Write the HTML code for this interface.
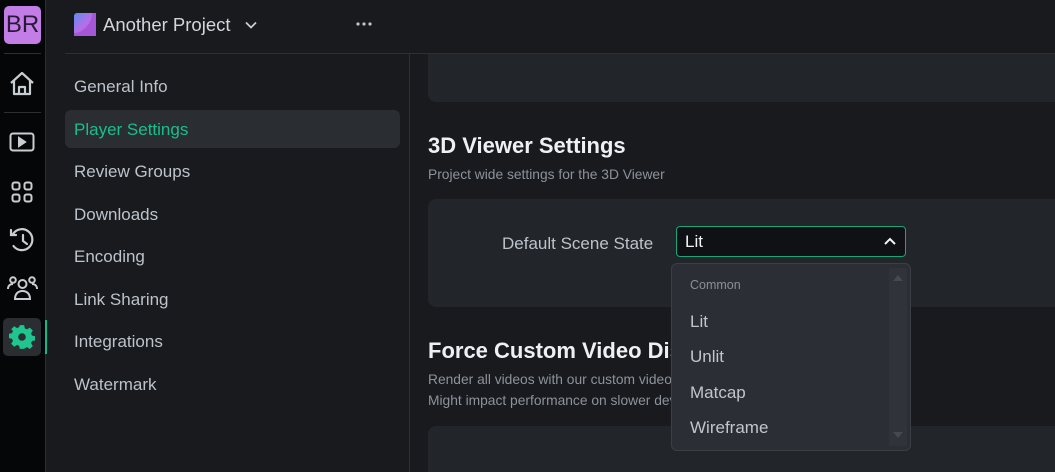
<!DOCTYPE html>
<html><head><style>
*{margin:0;padding:0;box-sizing:border-box}
html,body{width:1055px;height:472px;overflow:hidden}
body{background:#181a1d;font-family:"Liberation Sans",sans-serif;position:relative}
.rail{position:absolute;left:0;top:0;width:46px;height:472px;background:#050607;border-right:1px solid #2a2d31}
.abs{position:absolute}
.nav{position:absolute;left:74px;font-size:17px;color:#bcc3cb}
.card{position:absolute;left:428px;width:640px;background:#222529;border-radius:8px}
h2{position:absolute;left:428px;font-size:22px;color:#eef0f2;font-weight:bold}
.sub{position:absolute;left:428px;font-size:13.8px;color:#8c939c}
.dd{position:absolute;left:671px;top:263px;width:240px;height:188px;background:#2b2f35;border:1px solid #3a3f46;border-radius:6px}
.it{position:absolute;left:18px;font-size:17px;color:#c0c6cd}
</style></head><body>
<div class="rail"></div>
<div class="abs" style="left:4px;top:6px;width:37px;height:38px;background:#c27ee6;border-radius:5px;color:#2a1838;font-size:24px;line-height:38px;text-align:center">BR</div>
<div class="abs" style="left:4px;top:53px;width:37px;height:1px;background:#2c2f33"></div>
<div class="abs" style="left:4px;top:112px;width:37px;height:1px;background:#2c2f33"></div>
<svg class="abs" style="left:8px;top:70px" width="28" height="28" viewBox="0 0 28 28" fill="none" stroke="#c8cdd2" stroke-width="2.2" stroke-linejoin="round"><path d="M3 13L14 3l11 10M6 11v13h16V11M11 24v-7h6v7"/></svg>
<svg class="abs" style="left:9px;top:132px" width="26" height="20" viewBox="0 0 26 20" fill="none" stroke="#c8cdd2" stroke-width="2"><rect x="1.5" y="1.5" width="23" height="17" rx="2.5"/><path d="M10 6v8l6-4z" fill="#c8cdd2"/></svg>
<svg class="abs" style="left:11px;top:181px" width="22" height="22" viewBox="0 0 22 22" fill="none" stroke="#c8cdd2" stroke-width="2"><rect x="1.5" y="1.5" width="7" height="7" rx="2"/><rect x="13.5" y="1.5" width="7" height="7" rx="2"/><rect x="1.5" y="13.5" width="7" height="7" rx="2"/><rect x="13.5" y="13.5" width="7" height="7" rx="2"/></svg>
<svg class="abs" style="left:9px;top:227px" width="27" height="26" viewBox="0 0 27 26" fill="none" stroke="#c8cdd2" stroke-width="2.2" stroke-linecap="round"><path d="M4 7A10.5 10.5 0 1 1 4.5 19"/><path d="M2 3v5h5"/><path d="M14 8v6l4 3"/></svg>
<svg class="abs" style="left:7px;top:275px" width="31" height="26" viewBox="0 0 31 26" fill="none" stroke="#c8cdd2" stroke-width="2"><circle cx="15.5" cy="9" r="4"/><path d="M8 24c0-5 3-8 7.5-8s7.5 3 7.5 8z"/><circle cx="6" cy="5" r="2.8"/><circle cx="25" cy="5" r="2.8"/><path d="M1 14c0-3 2-5 5-5M30 14c0-3-2-5-5-5"/></svg>
<div class="abs" style="left:3px;top:318px;width:38px;height:38px;background:#2a2d31;border-radius:5px"></div>
<div class="abs" style="left:45px;top:320px;width:2px;height:34px;background:#12b886"></div>
<svg class="abs" style="left:9px;top:324px" width="26" height="26" viewBox="0 0 24 24"><path fill="#1fc48e" fill-rule="evenodd" d="M10 1h4l.6 3 2 1 2.6-1.7 2.8 2.8L20.3 8.7l1 2 2.7.5v4l-2.7.5-1 2 1.7 2.6-2.8 2.8-2.6-1.7-2 1L14 23h-4l-.6-2.7-2-1-2.6 1.7L2 18.2l1.7-2.6-1-2L0 13V9l2.7-.5 1-2L2 4.9 4.8 2.1 7.4 3.8l2-1zM12 8.5a3.5 3.5 0 1 0 0 7 3.5 3.5 0 0 0 0-7z"/></svg>

<svg class="abs" style="left:74px;top:13px" width="22" height="23" viewBox="0 0 22 23"><defs><linearGradient id="g" x1="0" y1="0" x2="1" y2="1"><stop offset="0" stop-color="#5a8cf0"/><stop offset=".5" stop-color="#b86ee8"/><stop offset="1" stop-color="#9a4ed0"/></linearGradient></defs><rect width="22" height="23" rx="3" fill="url(#g)"/><path d="M0 20C8 20 18 12 18 0H22V23H0z" fill="#a458d8"/></svg>
<div class="abs" style="left:103px;top:14px;font-size:18.5px;color:#d2d6da">Another Project</div>
<svg class="abs" style="left:245px;top:21px" width="12" height="8" viewBox="0 0 12 8" fill="none" stroke="#c8cdd2" stroke-width="1.8"><path d="M1 1.5l5 5 5-5"/></svg>
<svg class="abs" style="left:356px;top:22px" width="16" height="4"><circle cx="2" cy="2" r="1.6" fill="#c0c5ca"/><circle cx="8" cy="2" r="1.6" fill="#c0c5ca"/><circle cx="14" cy="2" r="1.6" fill="#c0c5ca"/></svg>
<div class="card" style="top:54px;height:48px;border-radius:0 0 8px 8px"></div>
<div class="abs" style="left:65px;top:53px;width:990px;height:1px;background:#2c3034"></div>
<div class="abs" style="left:409px;top:54px;width:1px;height:418px;background:#2c3034"></div>

<div class="nav" style="top:77px">General Info</div>
<div class="abs" style="left:65px;top:110px;width:335px;height:38px;background:#2a2d32;border-radius:6px"></div>
<div class="nav" style="top:120px;color:#17c08a">Player Settings</div>
<div class="nav" style="top:162px">Review Groups</div>
<div class="nav" style="top:205px">Downloads</div>
<div class="nav" style="top:247px">Encoding</div>
<div class="nav" style="top:290px">Link Sharing</div>
<div class="nav" style="top:332px">Integrations</div>
<div class="nav" style="top:375px">Watermark</div>

<h2 style="top:133px">3D Viewer Settings</h2>
<div class="sub" style="top:167px">Project wide settings for the 3D Viewer</div>
<div class="card" style="top:199px;height:108px"></div>
<div class="abs" style="left:502px;top:234px;font-size:17px;color:#bcc3cb">Default Scene State</div>
<div class="abs" style="left:676px;top:226px;width:230px;height:31px;background:#0f1114;border:1.5px solid #18a57a;border-radius:4px"></div>
<div class="abs" style="left:685px;top:232px;font-size:17px;color:#f2f4f5">Lit</div>
<svg class="abs" style="left:884px;top:237px" width="12" height="8" viewBox="0 0 12 8" fill="none" stroke="#f2f4f5" stroke-width="2"><path d="M1 7l5-5 5 5"/></svg>

<h2 style="top:338px">Force Custom Video Display</h2>
<div class="sub" style="top:372px">Render all videos with our custom video display for improved color accuracy.</div>
<div class="sub" style="top:393px">Might impact performance on slower devices.</div>
<div class="card" style="top:426px;height:46px;border-radius:8px 8px 0 0"></div>

<div class="dd">
<div class="abs" style="left:217px;top:4px;width:18px;height:178px;background:#30343a"></div>
<svg class="abs" style="left:220px;top:10px" width="12" height="8"><path d="M1 7l5-6 5 6z" fill="#454a51"/></svg>
<svg class="abs" style="left:220px;top:167px" width="12" height="8"><path d="M1 1l5 6 5-6z" fill="#454a51"/></svg>
<div class="it" style="top:14px;font-size:12.5px;color:#8a9098">Common</div>
<div class="it" style="top:48px">Lit</div>
<div class="it" style="top:83px">Unlit</div>
<div class="it" style="top:119px">Matcap</div>
<div class="it" style="top:154px">Wireframe</div>
</div>
</body></html>
